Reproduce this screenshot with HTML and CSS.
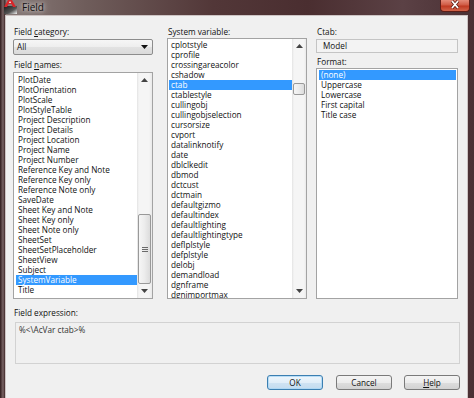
FILE: index.html
```html
<!DOCTYPE html>
<html>
<head>
<meta charset="utf-8">
<link rel="stylesheet" href="styles.css">
</head>
<body>
<div class="window">
  <div class="titlebar">
    <svg class="app-icon" width="15" height="14" viewBox="0 0 15 14">
      <defs>
        <linearGradient id="ib" x1="0" y1="0" x2="1" y2="1">
          <stop offset="0" stop-color="#1a1a1a"/>
          <stop offset="0.6" stop-color="#555"/>
          <stop offset="1" stop-color="#f4f4f4"/>
        </linearGradient>
      </defs>
      <rect x="1" y="6" width="13" height="8" fill="url(#ib)"/>
      <polygon points="1,7 5,0 9,0 13,7 10,7 8.5,4 5.5,4 4,7" fill="#d8262b"/>
      <polygon points="6,3 7,1 8,3" fill="#fff"/>
    </svg>
    <span class="title">Field</span>
    <div class="close">
      <svg width="30" height="12" viewBox="0 0 30 12">
        <path d="M12 2 L18 9 M18 2 L12 9" stroke="#5a1a14" stroke-width="3.2"/>
        <path d="M12 2 L18 9 M18 2 L12 9" stroke="#fff" stroke-width="1.8"/>
      </svg>
    </div>
  </div>
  <div class="client">
    <div class="columns">
      <div class="col col1">
        <div class="label">Field <u>c</u>ategory:</div>
        <div class="combo">
          <span class="combo-text">All</span>
          <svg class="combo-arrow" width="7" height="4" viewBox="0 0 7 4"><polygon points="0,0 7,0 3.5,4" fill="#111"/></svg>
        </div>
        <div class="label label-gap">Field <u>n</u>ames:</div>
        <div class="list list1">
          <div class="items">
            <div class="item">PlotDate</div>
            <div class="item">PlotOrientation</div>
            <div class="item">PlotScale</div>
            <div class="item">PlotStyleTable</div>
            <div class="item">Project Description</div>
            <div class="item">Project Details</div>
            <div class="item">Project Location</div>
            <div class="item">Project Name</div>
            <div class="item">Project Number</div>
            <div class="item">Reference Key and Note</div>
            <div class="item">Reference Key only</div>
            <div class="item">Reference Note only</div>
            <div class="item">SaveDate</div>
            <div class="item">Sheet Key and Note</div>
            <div class="item">Sheet Key only</div>
            <div class="item">Sheet Note only</div>
            <div class="item">SheetSet</div>
            <div class="item">SheetSetPlaceholder</div>
            <div class="item">SheetView</div>
            <div class="item">Subject</div>
            <div class="item sel">SystemVariable</div>
            <div class="item">Title</div>
          </div>
          <div class="vscroll">
            <div class="sbtn"><svg width="7" height="4" viewBox="0 0 7 4"><polygon points="0,4 7,4 3.5,0" fill="#444"/></svg></div>
            <div class="track">
              <div class="spacer" style="height:127px"></div>
              <div class="thumb" style="height:70px"><span class="grip"></span></div>
            </div>
            <div class="sbtn"><svg width="7" height="4" viewBox="0 0 7 4"><polygon points="0,0 7,0 3.5,4" fill="#444"/></svg></div>
          </div>
        </div>
      </div>
      <div class="col col2">
        <div class="label">System variable:</div>
        <div class="list list2">
          <div class="items">
            <div class="item">cplotstyle</div>
            <div class="item">cprofile</div>
            <div class="item">crossingareacolor</div>
            <div class="item">cshadow</div>
            <div class="item sel">ctab</div>
            <div class="item">ctablestyle</div>
            <div class="item">cullingobj</div>
            <div class="item">cullingobjselection</div>
            <div class="item">cursorsize</div>
            <div class="item">cvport</div>
            <div class="item">datalinknotify</div>
            <div class="item">date</div>
            <div class="item">dblclkedit</div>
            <div class="item">dbmod</div>
            <div class="item">dctcust</div>
            <div class="item">dctmain</div>
            <div class="item">defaultgizmo</div>
            <div class="item">defaultindex</div>
            <div class="item">defaultlighting</div>
            <div class="item">defaultlightingtype</div>
            <div class="item">deflplstyle</div>
            <div class="item">defplstyle</div>
            <div class="item">delobj</div>
            <div class="item">demandload</div>
            <div class="item">dgnframe</div>
            <div class="item">dgnimportmax</div>
          </div>
          <div class="vscroll narrow">
            <div class="sbtn"><svg width="7" height="4" viewBox="0 0 7 4"><polygon points="0,4 7,4 3.5,0" fill="#444"/></svg></div>
            <div class="track">
              <div class="spacer" style="height:30px"></div>
              <div class="thumb" style="height:12px"></div>
            </div>
            <div class="sbtn"><svg width="7" height="4" viewBox="0 0 7 4"><polygon points="0,0 7,0 3.5,4" fill="#444"/></svg></div>
          </div>
        </div>
      </div>
      <div class="col col3">
        <div class="label">Ctab:</div>
        <div class="textbox">Model</div>
        <div class="label label-gap3">Format:</div>
        <div class="list list3">
          <div class="items">
            <div class="item sel">(none)</div>
            <div class="item">Uppercase</div>
            <div class="item">Lowercase</div>
            <div class="item">First capital</div>
            <div class="item">Title case</div>
          </div>
        </div>
      </div>
    </div>
    <div class="label expr-label">Field expression:</div>
    <div class="expr">%&lt;\AcVar ctab&gt;%</div>
    <div class="buttons">
      <div class="btn default">OK</div>
      <div class="btn cancel">Cancel</div>
      <div class="btn help"><u>H</u>elp</div>
    </div>
  </div>
</div>
</body>
</html>
```

FILE: styles.css
```css
* { box-sizing: border-box; }
html, body { margin: 0; padding: 0; }
body {
  width: 474px;
  height: 398px;
  overflow: hidden;
  font-family: "Open Sans", "Noto Sans", sans-serif;
  font-size: 8.2px;
  color: #111;
  background: #3e2627;
}
u { text-decoration: underline; text-underline-offset: 1px; }

.window {
  width: 474px;
  height: 398px;
  display: flex;
  flex-direction: column;
  background:
    linear-gradient(90deg, #2e1a1b 0px, #7a6566 3px, #3e2627 5px, transparent 6px),
    linear-gradient(180deg, transparent 0, transparent 18px, rgba(0,0,0,0) 100%),
    linear-gradient(90deg, #8a7d7b 0%, #6f5d5b 18%, #523738 45%, #4a2e30 65%, #5b4145 85%, #4a3034 100%);
}

.titlebar {
  height: 15px;
  flex: none;
  display: flex;
  align-items: flex-start;
  padding-left: 3px;
}
.app-icon { display: block; margin-top: 0; }
.title {
  margin-left: 4px;
  font-size: 10px;
  line-height: 15px;
  color: #111;
  text-shadow: 0 0 4px rgba(255,255,255,0.9), 0 0 8px rgba(255,255,255,0.6);
}
.close {
  margin-left: auto;
  margin-right: 4px;
  width: 30px;
  height: 12px;
  border: 1px solid #5e1d17;
  border-top: none;
  border-radius: 0 0 4px 4px;
  background: linear-gradient(180deg, #e48a78 0%, #d05b45 45%, #c03a22 55%, #d2644a 100%);
}
.close svg { display: block; margin: -1px 0 0 -1px; }

.client {
  flex: 1;
  margin: 0 6px 0 5px;
  background: #f0f0f0;
  border: 1px solid #cdc4c4;
  border-bottom: none;
  padding: 11px 7px 0 7px;
  display: flex;
  flex-direction: column;
}

.columns {
  display: flex;
  height: 272px;
  padding-right: 2px;
}
.col { display: flex; flex-direction: column; }
.col1 { width: 140px; }
.col2 { width: 140px; margin-left: 14px; }
.col3 { width: 142px; margin-left: 9px; }

.label {
  height: 10px;
  line-height: 10px;
  padding-left: 1px;
  white-space: nowrap;
}
.label-gap { margin-top: 5px; }
.label-gap3 { margin-top: 4px; }

.combo {
  margin-top: 2px;
  height: 16px;
  border: 1px solid #8c8c8c;
  border-radius: 2px;
  background: linear-gradient(180deg, #f6f6f6 0%, #eeeeee 50%, #e2e2e2 51%, #dadada 100%);
  display: flex;
  align-items: center;
  padding: 0 4px 0 3px;
}
.combo-text { flex: 1; line-height: 14px; }
.combo-arrow { display: block; }

.textbox {
  margin-top: 2px;
  height: 14px;
  border: 1px solid #c4c4c4;
  background: #f3f3f3;
  line-height: 12px;
  padding-left: 6px;
}

.list {
  flex: 1;
  min-height: 0;
  border: 1px solid #a3a3a3;
  background: #fff;
  display: flex;
  overflow: hidden;
}
.list1 { margin-top: 2px; }
.list2 { margin-top: 1px; }
.list3 { margin-top: 1px; }
.items {
  flex: 1;
  min-width: 0;
  padding: 1px 0 0 1px;
  overflow: hidden;
}
.list1 .items { padding: 2px 0 0 2px; }
.list3 .items { padding: 1px 1px 0 2px; }
.item {
  height: 10px;
  line-height: 10px;
  padding-left: 2px;
  white-space: nowrap;
}
.item.sel { background: #3399ff; color: #fff; }

.vscroll {
  width: 15px;
  flex: none;
  display: flex;
  flex-direction: column;
  background: linear-gradient(90deg, #e3e3e3 0, #f5f5f5 2px, #f5f5f5 12px, #e9e9e9 100%);
}
.vscroll.narrow { width: 14px; }
.sbtn {
  height: 14px;
  flex: none;
  display: flex;
  align-items: center;
  justify-content: center;
}
.sbtn svg { display: block; }
.track {
  flex: 1;
  display: flex;
  flex-direction: column;
}
.spacer { flex: none; }
.thumb {
  flex: none;
  margin: 0 1px;
  border: 1px solid #999;
  border-radius: 2px;
  background: linear-gradient(90deg, #f6f6f6 0%, #ececec 50%, #dcdcdc 100%);
  display: flex;
  align-items: center;
  justify-content: center;
}
.grip {
  width: 6px;
  height: 5px;
  border-top: 1px solid #6a6a6a;
  border-bottom: 1px solid #6a6a6a;
  background: linear-gradient(180deg, transparent 1px, #6a6a6a 1px, #6a6a6a 2px, transparent 2px);
}

.expr-label { margin-top: 9px; padding-left: 1px; }
.expr {
  margin-top: 4px;
  margin-left: 2px;
  height: 42px;
  border: 1px solid #d2d2d2;
  background: #f0f0f0;
  padding: 2px 0 0 3px;
  line-height: 10px;
  color: #333;
}

.buttons {
  margin-top: 11px;
  display: flex;
  justify-content: flex-end;
}
.btn {
  width: 56px;
  height: 15px;
  border: 1px solid #7a7a7a;
  border-radius: 3px;
  background: linear-gradient(180deg, #f4f4f4 0%, #ececec 50%, #dedede 51%, #d2d2d2 100%);
  text-align: center;
  line-height: 13px;
  color: #111;
}
.btn.default {
  width: 56px;
  border-color: #3c7fb1;
  background: linear-gradient(180deg, #eef6fc 0%, #e1eef8 50%, #cfe3f3 51%, #c4dcef 100%);
  box-shadow: inset 0 0 0 1px rgba(170,215,245,0.8);
}
.btn.cancel { margin-left: 13px; }
.btn.help { margin-left: 12px; }
```
